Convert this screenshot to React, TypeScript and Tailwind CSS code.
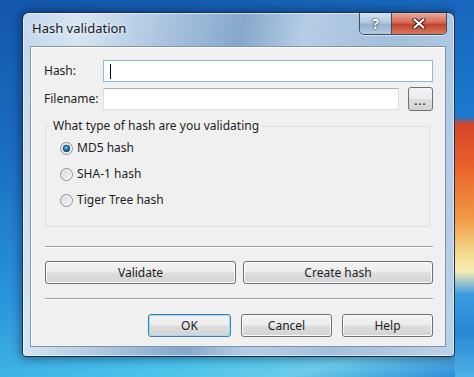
import React from "react";

function Radio({ checked }: { checked?: boolean }) {
    return (
        <svg width="13" height="13" viewBox="0 0 13 13" className="shrink-0">
            <defs>
                <linearGradient id="rfill" x1="0" y1="0" x2="1" y2="1">
                    <stop offset="0" stopColor="#d4d4d4" />
                    <stop offset="1" stopColor="#fbfbfb" />
                </linearGradient>
                <radialGradient id="rdot" cx="0.45" cy="0.4" r="0.6">
                    <stop offset="0" stopColor="#8fd0f7" />
                    <stop offset="0.45" stopColor="#2b7bc0" />
                    <stop offset="1" stopColor="#0f3e6e" />
                </radialGradient>
            </defs>
            <circle cx="6.5" cy="6.5" r="6" fill="url(#rfill)" stroke="#8e8f8f" strokeWidth="1" />
            <circle cx="6.5" cy="6.5" r="4.6" fill="none" stroke="#f4f4f4" strokeWidth="0.8" />
            {checked && <circle cx="6.5" cy="6.5" r="3.4" fill="url(#rdot)" stroke="#1d4d7a" strokeWidth="0.6" />}
        </svg>
    )
}

interface BtnProps {
    label: string;
    width: string;
    primary?: boolean;
}

function Btn({ label, width, primary }: BtnProps) {
    return (
        <button
            type="button"
            className={`${width} h-[23px] shrink-0 rounded-[3px] border ${primary ? "border-[#3c7fb1] shadow-[inset_0_0_0_1px_#9fdcf4]" : "border-[#707070] shadow-[inset_0_0_0_1px_#fbfbfb]"} bg-[linear-gradient(to_bottom,#f4f4f4_0%,#ececec_48%,#dedede_52%,#d3d3d3_100%)] text-[12px] leading-none text-[#1e1e1e]`}
        >
            {label}
        </button>
    )
}

function Separator() {
    return <div className="ml-[1px] h-[2px] border-t border-b border-t-[#a0a0a0] border-b-white" />
}

function CaptionButtons() {
    return (
        <div className="ml-auto mr-[7px] flex h-[22px] overflow-hidden rounded-b-[5px] border border-t-0 border-[#3b4d63] shadow-[0_1px_0_rgba(255,255,255,0.55)]">
            <div className="flex w-[32px] items-center justify-center border-r border-[#3b4d63] bg-[linear-gradient(to_bottom,#d3e2f1_0%,#b1c8df_48%,#95b1cf_52%,#b2cbe4_100%)]">
                <span className="text-[14px] font-bold leading-none text-white [text-shadow:0_0_2px_#1d2b3a,0_0_1px_#1d2b3a]">?</span>
            </div>
            <div className="flex w-[54px] items-center justify-center bg-[linear-gradient(to_bottom,#e9ab9f_0%,#d66b55_45%,#c4432c_55%,#d77a63_100%)]">
                <svg width="14" height="11" viewBox="0 0 14 11">
                    <path d="M2.5 1.5 11.5 9.5M11.5 1.5 2.5 9.5" stroke="#3a1410" strokeWidth="4" strokeLinecap="round" />
                    <path d="M2.5 1.5 11.5 9.5M11.5 1.5 2.5 9.5" stroke="#ffffff" strokeWidth="2.2" strokeLinecap="round" />
                </svg>
            </div>
        </div>
    )
}

function Dialog() {
    return (
        <div className="flex h-[345px] w-[433px] flex-col rounded-t-[7px] rounded-b-[4px] border border-[#1f2f44] bg-[linear-gradient(100deg,#c2d6ec_0%,#d6e5f3_12%,#a9c3de_30%,#86a8cc_45%,#b6cde5_58%,#a3bfdb_75%,#bcd2e9_100%)] shadow-[0_0_10px_2px_rgba(0,20,50,0.45),inset_0_0_0_1px_rgba(255,255,255,0.55)]">
            <div className="flex h-[33px] shrink-0 items-start">
                <span className="pl-[9px] pt-[6px] text-[13px] leading-[18px] text-[#1a1a1a] [text-shadow:0_0_8px_#ffffff]">Hash validation</span>
                <CaptionButtons />
            </div>
            <div className="mb-[9px] ml-[7px] mr-[8px] flex flex-1 flex-col border border-[#7f93ab] bg-[#f0f0f0] pl-[13px] pr-[12px] shadow-[inset_1px_1px_0_#ffffff]">
                <div className="mt-[13px] flex h-[22px] items-center">
                    <span className="w-[59px] shrink-0">Hash:</span>
                    <div className="flex h-[22px] w-[331px] items-center border border-[#8fbadf] bg-white">
                        <span className="ml-[6px] h-[15px] w-[1px] bg-black" />
                    </div>
                </div>
                <div className="mt-[5px] flex h-[24px] items-center">
                    <span className="w-[59px] shrink-0">Filename:</span>
                    <div className="h-[22px] w-[296px] border border-[#dbdfe6] border-t-[#abadb3] bg-white" />
                    <button type="button" className="ml-[9px] h-[24px] w-[25px] rounded-[3px] border border-[#707070] bg-[linear-gradient(to_bottom,#f4f4f4_0%,#ececec_48%,#dedede_52%,#d3d3d3_100%)] pt-[3px] text-[11px] font-bold leading-none tracking-[1px] text-[#333]">
                        ...
                    </button>
                </div>
                <fieldset className="ml-[1px] mt-[7px] h-[109px] w-[385px] rounded-[3px] border border-[#d5dfe5]">
                    <legend className="ml-[4px] px-[3px] leading-[16px]">What type of hash are you validating</legend>
                    <div className="flex flex-col pl-[14px] pt-[1px]">
                        <label className="flex h-[26px] items-center gap-[4px]"><Radio checked />MD5 hash</label>
                        <label className="flex h-[26px] items-center gap-[4px]"><Radio />SHA-1 hash</label>
                        <label className="flex h-[26px] items-center gap-[4px]"><Radio />Tiger Tree hash</label>
                    </div>
                </fieldset>
                <div className="mt-[19px]"><Separator /></div>
                <div className="ml-[1px] mt-[13px] flex gap-[7px]">
                    <Btn label="Validate" width="w-[191px]" />
                    <Btn label="Create hash" width="w-[190px]" />
                </div>
                <div className="mt-[14px]"><Separator /></div>
                <div className="mt-[14px] flex justify-end gap-[10px]">
                    <Btn label="OK" width="w-[83px]" primary />
                    <Btn label="Cancel" width="w-[91px]" />
                    <Btn label="Help" width="w-[91px]" />
                </div>
            </div>
        </div>
    )
}

export default function App() {
    return (
        <div className="flex h-[377px] w-[474px] overflow-hidden bg-[linear-gradient(165deg,#1457ab_0%,#1a6cc2_30%,#2a94db_60%,#4ac2ea_82%,#6ccbe9_90%,#2a86d6_100%)] font-['Noto_Sans',sans-serif] text-[12px] text-[#1e1e1e]">
            <div className="w-[22px] shrink-0" />
            <div className="shrink-0 pt-[12px]">
                <Dialog />
            </div>
            <div className="flex-1 bg-[linear-gradient(to_bottom,#1766bd_0%,#1c79cf_31%,#d8442a_33%,#ea642d_45%,#f29a44_58%,#f3d98c_67%,#f7ecb6_72%,#3d9be0_78%,#2a86d6_88%,#4fb2e6_100%)]" />
        </div>
    )
}
